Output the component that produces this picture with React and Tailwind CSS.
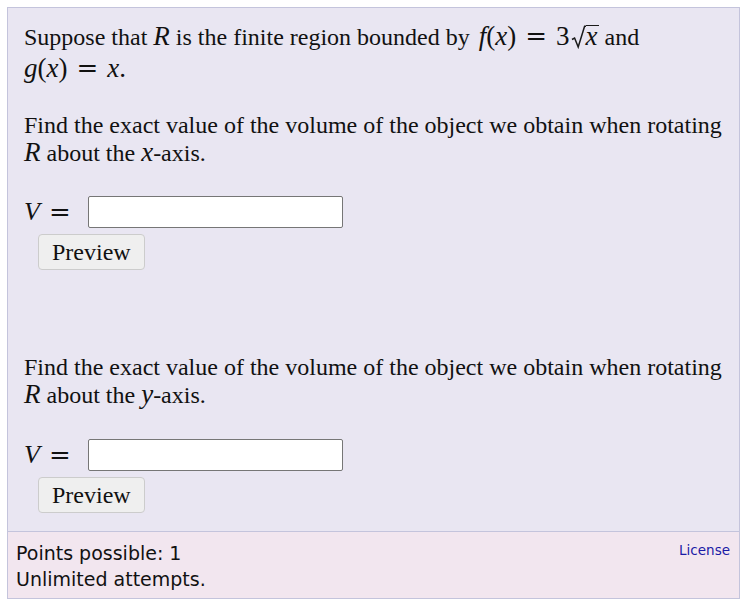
import React from "react";

const serif = { fontFamily: '"Liberation Serif", "Times New Roman", serif' };

function MI({ children }) {
  return <span className="italic">{children}</span>;
}

function M({ children }) {
  return <span className="text-[27px] leading-none">{children}</span>;
}

function Eq() {
  return (
    <span className="mx-[9px] text-[26px] leading-none" style={{ fontFamily: '"DejaVu Serif", serif' }}>
      =
    </span>
  );
}

function Sqrt({ children }) {
  return (
    <span className="inline-block relative pl-[15px] ml-[1px]">
      <svg
        className="absolute left-0 top-[3px]"
        width="15"
        height="24"
        viewBox="0 0 15 24"
      >
        <path d="M1 14.5 L3.6 13 L7.2 22 L13.6 1.2 L15 1.2" stroke="#1a1a1a" strokeWidth="1.5" fill="none" strokeLinejoin="miter" />
      </svg>
      <span className="inline-block border-t-[1.5px] border-[#1a1a1a] mt-[3px] leading-[21px] pr-[1px]">
        {children}
      </span>
    </span>
  );
}

function AnswerBlock({ top }) {
  return (
    <div className={top}>
      <div className="flex items-center">
        <span className="leading-none flex items-center">
          <span className="italic text-[26px]">V</span>
          <Eq />
        </span>
        <input
          type="text"
          className="ml-[8px] w-[255px] h-[32px] bg-white border border-[#767676] rounded-[2px]"
        />
      </div>
      <button
        className="mt-[6px] ml-[14px] h-[36px] px-[13px] bg-[#efefef] border border-[#cccccc] rounded-[4px] text-[24px] leading-none text-[#111]"
        style={serif}
      >
        Preview
      </button>
    </div>
  );
}

export default function App() {
  return (
    <div className="w-[742px] h-[600px] bg-white pt-[7px] pl-[7px]">
      <div className="w-[733px] h-[592px] border border-[#c4c4dc] flex flex-col">
        <div className="flex-1 bg-[#e9e6f2] px-[16px] pt-[13px] text-[24px] text-[#111] leading-[27px]" style={serif}>
          <p className="leading-[32px]">
            Suppose that <M><MI>R</MI></M> is the finite region bounded by{" "}
            <span className="ml-[3px]" />
            <M><MI>f</MI>(<MI>x</MI>)</M><Eq /><M>3<Sqrt><MI>x</MI></Sqrt></M> and
            <br />
            <M><MI>g</MI>(<MI>x</MI>)</M><Eq /><M><MI>x</MI>.</M>
          </p>
          <p className="mt-[27px]">
            Find the exact value of the volume of the object we obtain when rotating <M><MI>R</MI></M> about the <M><MI>x</MI></M>-axis.
          </p>
          <AnswerBlock top="mt-[29px]" />
          <div className="h-[84px]" />
          <p>
            Find the exact value of the volume of the object we obtain when rotating <M><MI>R</MI></M> about the <M><MI>y</MI></M>-axis.
          </p>
          <AnswerBlock top="mt-[30px]" />
        </div>
        <div
          className="h-[67px] bg-[#f2e6ef] border-t border-[#c4c4dc] px-[8px] pt-[8px] flex justify-between"
          style={{ fontFamily: '"DejaVu Sans", sans-serif' }}
        >
          <div className="text-[19px] leading-[26px] text-[#111]">
            <div>Points possible: 1</div>
            <div>Unlimited attempts.</div>
          </div>
          <a className="text-[13.5px] text-[#1a1aa6] mt-[0px] mr-[1px]">License</a>
        </div>
      </div>
    </div>
  );
}
